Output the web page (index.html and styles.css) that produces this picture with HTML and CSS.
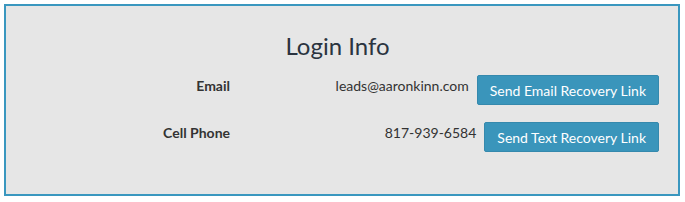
FILE: index.html
```html
<!DOCTYPE html>
<html lang="en">
<head>
  <meta charset="UTF-8" />
  <title>Login Info</title>
  <link rel="stylesheet" href="styles.css">
</head>
<body>

  <div class="panel">
    <h2 class="panel-title">Login Info</h2>

    <div class="info-row">
      <div class="info-label">Email</div>
      <div class="info-value">leads@aaronkinn.com</div>
      <button class="recovery-btn">Send Email Recovery Link</button>
    </div>

    <div class="info-row">
      <div class="info-label">Cell Phone</div>
      <div class="info-value">817-939-6584</div>
      <button class="recovery-btn">Send Text Recovery Link</button>
    </div>
  </div>

</body>
</html>
```

FILE: styles.css
```css
body {
  margin: 0;
  background: #fff;
  font-family: Lato, "Open Sans", sans-serif;
  color: #333;
}

.panel {
  margin: 4px 5px 4px 4px;
  height: 192px;
  box-sizing: border-box;
  border: 2px solid #3a97bf;
  background: #e6e6e6;
  padding: 23px 19px 0 0;
}

.panel-title {
  margin: 0 0 12px 10px;
  font-size: 24px;
  font-weight: 400;
  line-height: 34px;
  text-align: center;
  color: #2b3440;
}

.info-row {
  display: flex;
  align-items: flex-start;
  margin-bottom: 17px;
}

.info-label {
  width: 224px;
  text-align: right;
  font-size: 14px;
  font-weight: 700;
  line-height: 20px;
  margin-top: 1px;
}

.info-value {
  flex: 1;
  text-align: right;
  font-size: 14px;
  line-height: 20px;
  margin-top: 1px;
}

.recovery-btn {
  margin-left: 8px;
  height: 30px;
  padding: 0 12px;
  border: 1px solid #3589ad;
  border-radius: 2px;
  background: #3a95bb;
  color: #fff;
  font-family: Lato, "Open Sans", sans-serif;
  font-size: 14px;
  cursor: pointer;
}
```
